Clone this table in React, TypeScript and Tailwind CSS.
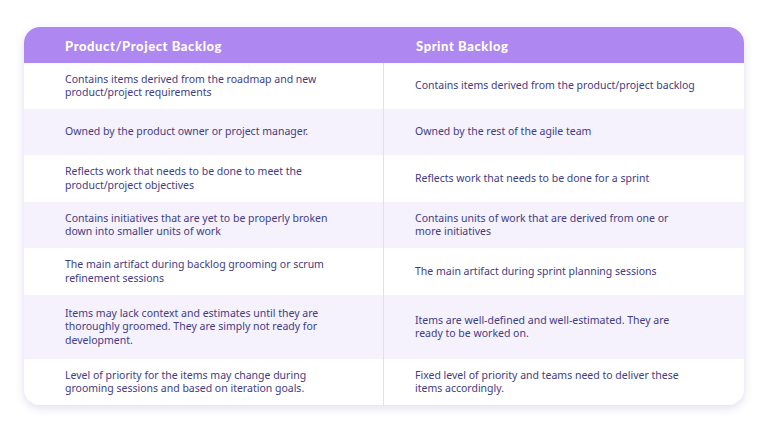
const rows: { left: string[]; right: string[]; h: string; tint: boolean }[] = [
  {
    left: ["Contains items derived from the roadmap and new", "product/project requirements"],
    right: ["Contains items derived from the product/project backlog"],
    h: "h-[46px]",
    tint: false,
  },
  {
    left: ["Owned by the product owner or project manager."],
    right: ["Owned by the rest of the agile team"],
    h: "h-[46px]",
    tint: true,
  },
  {
    left: ["Reflects work that needs to be done to meet the", "product/project objectives"],
    right: ["Reflects work that needs to be done for a sprint"],
    h: "h-[47px]",
    tint: false,
  },
  {
    left: ["Contains initiatives that are yet to be properly broken", "down into smaller units of work"],
    right: ["Contains units of work that are derived from one or", "more initiatives"],
    h: "h-[46px]",
    tint: true,
  },
  {
    left: ["The main artifact during backlog grooming or scrum", "refinement sessions"],
    right: ["The main artifact during sprint planning sessions"],
    h: "h-[47px]",
    tint: false,
  },
  {
    left: [
      "Items may lack context and estimates until they are",
      "thoroughly groomed. They are simply not ready for",
      "development.",
    ],
    right: ["Items are well-defined and well-estimated. They are", "ready to be worked on."],
    h: "h-[64px]",
    tint: true,
  },
  {
    left: ["Level of priority for the items may change during", "grooming sessions and based on iteration goals."],
    right: ["Fixed level of priority and teams need to deliver these", "items accordingly."],
    h: "h-[46px]",
    tint: false,
  },
]

function Cell({ lines, pad }: { lines: string[]; pad: string }) {
  return (
    <div className={`flex flex-col justify-center ${pad}`}>
      {lines.map((l) => (
        <span key={l} className="whitespace-nowrap leading-[13.3px]">
          {l}
        </span>
      ))}
    </div>
  )
}

export default function App() {
  return (
    <div className="w-[768px] h-[432px] bg-white pt-[27px] pl-[24px]">
      <div className="w-[720px] rounded-[16px] overflow-hidden bg-white shadow-[0_3px_10px_rgba(90,70,150,0.18)]">
        <div
          className="grid grid-cols-[360px_360px] h-[36px] pt-[3px] bg-[#ae87f0] text-white items-center text-[13px] font-black tracking-[0.045em]"
          style={{ fontFamily: "Lato, 'Noto Sans', sans-serif" }}
        >
          <div className="pl-[41px]">Product/Project Backlog</div>
          <div className="pl-[32px]">Sprint Backlog</div>
        </div>
        <div
          className="text-[10.5px] text-[#423c82]"
          style={{ fontFamily: "'Noto Sans', 'Open Sans', sans-serif" }}
        >
          {rows.map((r, i) => (
            <div
              key={i}
              className={`grid grid-cols-[360px_360px] ${r.h} ${r.tint ? "bg-[#f5f2fd]" : "bg-white"}`}
            >
              <Cell lines={r.left} pad="pl-[41px] border-r border-[#e2deee]" />
              <Cell lines={r.right} pad="pl-[31px]" />
            </div>
          ))}
        </div>
      </div>
    </div>
  )
}
